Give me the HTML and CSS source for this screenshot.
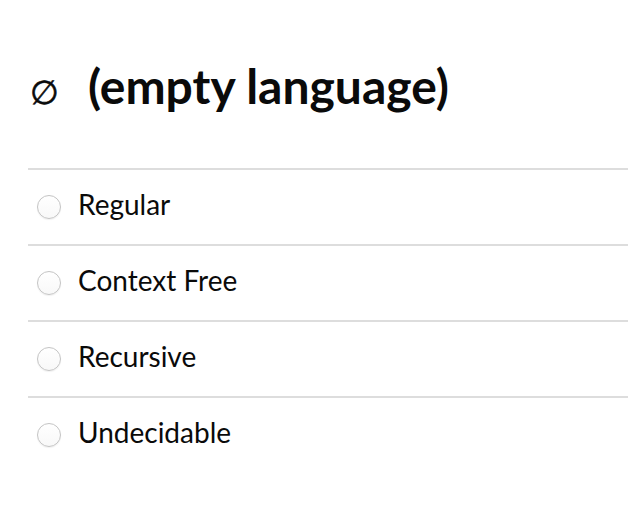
FILE: index.html
```html
<!DOCTYPE html>
<html lang="en">
<head>
    <meta charset="UTF-8">
    <title>Language Class</title>
    <link rel="stylesheet" href="styles.css">
</head>
<body>
    <div class="question">
        <h2 class="title"><span class="symbol">&empty;</span>(empty language)</h2>
        <ul class="choices">
            <li><label><input type="radio" name="class"><span>Regular</span></label></li>
            <li><label><input type="radio" name="class"><span>Context Free</span></label></li>
            <li><label><input type="radio" name="class"><span>Recursive</span></label></li>
            <li><label><input type="radio" name="class"><span>Undecidable</span></label></li>
        </ul>
    </div>
</body>
</html>
```

FILE: styles.css
```css
* {
    box-sizing: border-box;
    margin: 0;
    padding: 0;
}
body {
    font-family: Lato, 'Noto Sans', sans-serif;
    background-color: #ffffff;
    color: #0a0a0a;
}
.question {
    padding: 56px 0 0 28px;
}
.title {
    display: flex;
    align-items: baseline;
    font-size: 48px;
    font-weight: 700;
    line-height: 60px;
    padding-left: 2px;
    margin-bottom: 47px;
}
.symbol {
    font-size: 33px;
    font-weight: 400;
    -webkit-text-stroke: 0.6px #0a0a0a;
    width: 58px;
}
.choices {
    list-style-type: none;
}
.choices li {
    border-top: 2px solid #dddddd;
    height: 76px;
}
.choices label {
    display: flex;
    align-items: center;
    height: 74px;
    gap: 17px;
    font-size: 28px;
    padding-left: 9px;
}
.choices label span {
    margin-bottom: 6px;
}
.choices input {
    appearance: none;
    width: 24px;
    height: 24px;
    border-radius: 50%;
    border: 1px solid #c4c4c4;
    background: linear-gradient(#ffffff, #f8f8f8);
    box-shadow: 0 1px 1px rgba(0, 0, 0, 0.06);
    flex-shrink: 0;
}
```
